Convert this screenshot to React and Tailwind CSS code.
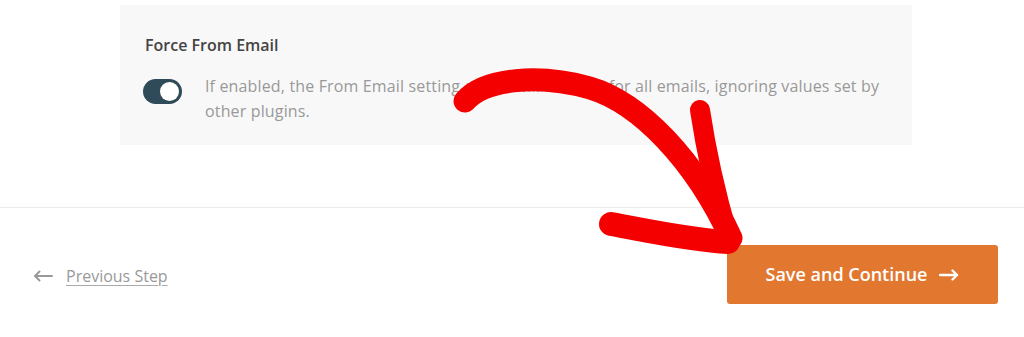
import React from "react";

export default function App() {
  return (
    <div className="relative w-[1024px] h-[337px] bg-white overflow-hidden" style={{ fontFamily: '"Open Sans", "Liberation Sans", sans-serif' }}>
      <div className="pt-[5px]">
        <div className="ml-[120px] w-[792px] h-[140px] bg-[#f8f8f8] pl-[25px] pt-[29px] pr-[20px]">
          <div className="text-[16px] leading-[22px] font-semibold text-[#444]">Force From Email</div>
          <div className="flex mt-[18px]">
            <div className="shrink-0 mt-[5px] ml-[-2px] w-[39px] h-[25px] rounded-full bg-[#2f4b59] relative">
              <div className="absolute right-[3px] top-[3px] w-[19px] h-[19px] rounded-full bg-white"></div>
            </div>
            <p className="ml-[23px] text-[16px] leading-[25px] text-[#999] w-[690px] tracking-[0.15px]">
              If enabled, the From Email setting above will be used for all emails, ignoring values set by other plugins.
            </p>
          </div>
        </div>
      </div>
      <div className="mt-[62px] border-t border-[#ebebeb] flex items-center justify-between pl-[33px] pr-[26px] pt-[37px]">
        <div className="flex items-center text-[#999] text-[16px] mt-[2px]">
          <svg width="20" height="12" viewBox="0 0 20 12" className="mr-[13px]">
            <path d="M19 6 H2 M6.5 1.5 L2 6 L6.5 10.5" fill="none" stroke="#999" strokeWidth="2" strokeLinecap="round" strokeLinejoin="round" />
          </svg>
          <span className="underline underline-offset-[3px] decoration-[#aaa]">Previous Step</span>
        </div>
        <button className="w-[271px] h-[59px] bg-[#e27730] rounded-[3px] text-white text-[18px] font-semibold flex items-center justify-center gap-[12px]">
          <span>Save and Continue</span>
          <svg width="20" height="12" viewBox="0 0 20 12">
            <path d="M1 6 H18 M13.5 1.5 L18 6 L13.5 10.5" fill="none" stroke="#fff" strokeWidth="2.4" strokeLinecap="round" strokeLinejoin="round" />
          </svg>
        </button>
      </div>
      <svg className="absolute inset-0 pointer-events-none" width="1024" height="337" viewBox="0 0 1024 337">
        <path d="M465 101 C 485 78, 540 74, 590 88 C 640 103, 695 160, 731 238" fill="none" stroke="#f50000" strokeWidth="23" strokeLinecap="round" />
        <path d="M700 110 C 706 150, 716 195, 728 236" fill="none" stroke="#f50000" strokeWidth="20" strokeLinecap="round" />
        <path d="M611 224 C 650 231, 690 240, 728 242" fill="none" stroke="#f50000" strokeWidth="24" strokeLinecap="round" />
      </svg>
    </div>
  );
}
